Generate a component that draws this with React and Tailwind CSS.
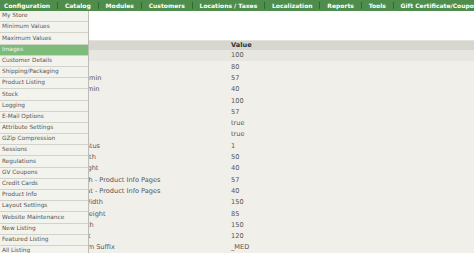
import React from 'react';

const NAV = [
  'Configuration',
  'Catalog',
  'Modules',
  'Customers',
  'Locations / Taxes',
  'Localization',
  'Reports',
  'Tools',
  'Gift Certificate/Coupons',
];

const MENU = [
  'My Store',
  'Minimum Values',
  'Maximum Values',
  'Images',
  'Customer Details',
  'Shipping/Packaging',
  'Product Listing',
  'Stock',
  'Logging',
  'E-Mail Options',
  'Attribute Settings',
  'GZip Compression',
  'Sessions',
  'Regulations',
  'GV Coupons',
  'Credit Cards',
  'Product Info',
  'Layout Settings',
  'Website Maintenance',
  'New Listing',
  'Featured Listing',
  'All Listing',
];

const ROWS = [
  ['Small Image Width', '100'],
  ['Small Image Height', '80'],
  ['Medium Image Width Admin', '57'],
  ['Middle Image Height Admin', '40'],
  ['Heading Image Width', '100'],
  ['Heading Image Height', '57'],
  ['Calculate Image Size', 'true'],
  ['Image Required', 'true'],
  ['Product Image Zoom Status', '1'],
  ['Zoom Pop-up Image Width', '50'],
  ['Zoom Pop-up Image Height', '40'],
  ['Small Popup Image Width - Product Info Pages', '57'],
  ['Main Popup Image Height - Product Info Pages', '40'],
  ['Product Listing, Image Width', '150'],
  ['Product Listing, Image Height', '85'],
  ['Subcategory Image Width', '150'],
  ['Popup Image Max Height', '120'],
  ['Listing Image File Medium Suffix', '_MED'],
];

export default function App() {
  return (
    <div className="relative w-[474px] h-[253px] overflow-hidden bg-white font-['DejaVu_Sans',Verdana,sans-serif] leading-none">
      <nav className="flex items-center h-[11px] bg-[#4f8d4d] pl-[4px] whitespace-nowrap text-[6px]">
        {NAV.map((item, i) => (
          <React.Fragment key={item}>
            {i > 0 && <span className="w-px h-[7px] bg-[#2e6a2d] mx-[6.9px] shrink-0" />}
            <span className="font-bold text-white shrink-0">{item}</span>
          </React.Fragment>
        ))}
      </nav>

      <div className="pt-[29px] text-[6.6px]">
        <div className="flex h-[10px] items-center bg-[#d7d7cf] border-t border-[#e4e4dd] text-[#333]">
          <div className="w-[231px] shrink-0" />
          <div className="font-bold">Value</div>
        </div>
        {ROWS.map(([label, value], i) => (
          <div
            key={i}
            className={`flex h-[11.3px] items-center text-[#555] ${i === 0 ? 'bg-[#e7e6e0]' : 'bg-[#f0efea]'}`}
          >
            <div className="w-[231px] shrink-0 pl-[8px] whitespace-nowrap">{label}</div>
            <div>{value}</div>
          </div>
        ))}
      </div>

      <ul className="absolute left-0 top-[11px] w-[89px] bg-[#f3f3ee] border-r border-[#bdbdb5] text-[5.8px]">
        {MENU.map((item) => (
          <li
            key={item}
            className={`flex items-center h-[11.2px] pl-[2px] border-b border-[#d2d2ca] whitespace-nowrap ${
              item === 'Images' ? 'bg-[#7cbc78] text-[#f4f8f0]' : 'text-[#555]'
            }`}
          >
            {item}
          </li>
        ))}
      </ul>
    </div>
  );
}
